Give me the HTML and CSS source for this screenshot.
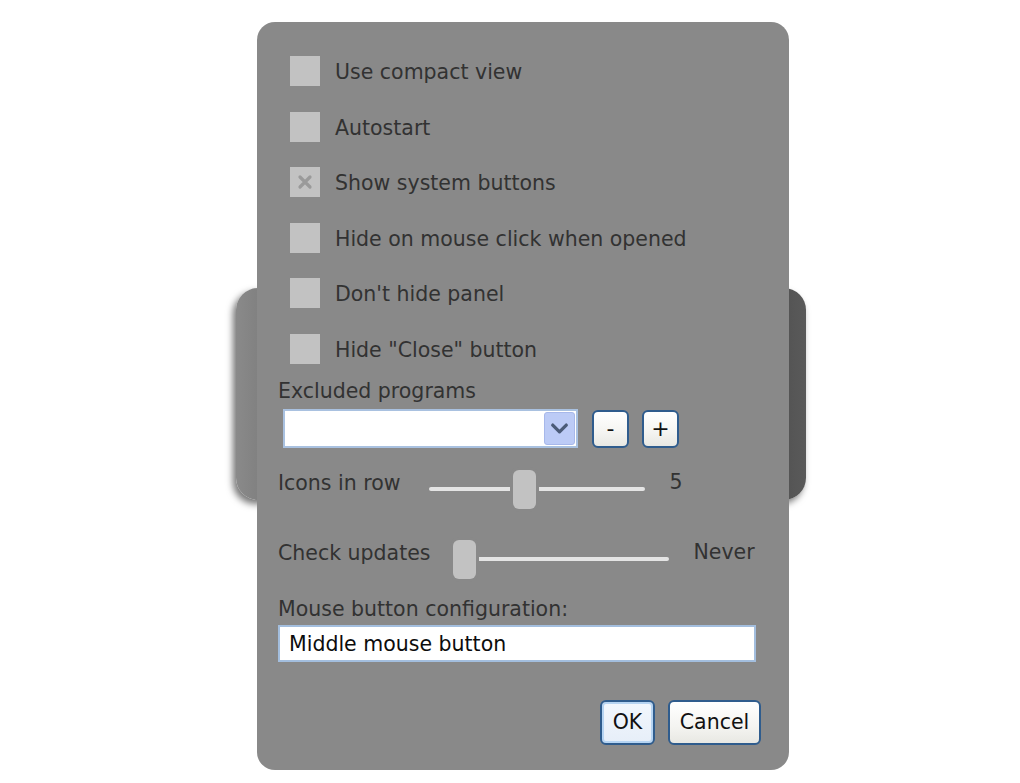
FILE: index.html
```html
<!DOCTYPE html>
<html lang="en">
<head>
<meta charset="utf-8">
<title>Settings</title>
<link rel="stylesheet" href="styles.css">
</head>
<body>
<div class="desk">
  <div class="panel"></div>
  <form class="dialog">
    <ul class="options">
      <li class="option"><span class="box"></span><span class="label">Use compact view</span></li>
      <li class="option"><span class="box"></span><span class="label">Autostart</span></li>
      <li class="option"><span class="box checked"><svg viewBox="0 0 30 30" width="30" height="30"><path d="M10 10 L20 20 M20 10 L10 20" stroke="#9a9a9a" stroke-width="3.2" stroke-linecap="round"/></svg></span><span class="label">Show system buttons</span></li>
      <li class="option"><span class="box"></span><span class="label">Hide on mouse click when opened</span></li>
      <li class="option"><span class="box"></span><span class="label">Don't hide panel</span></li>
      <li class="option"><span class="box"></span><span class="label">Hide "Close" button</span></li>
    </ul>

    <div class="caption caption-excluded">Excluded programs</div>
    <div class="combo-row">
      <div class="combo">
        <span class="combo-drop"><svg viewBox="0 0 30 32" width="30" height="32"><path d="M8 13 L15 20 L22 13" fill="none" stroke="#4b5b78" stroke-width="3.4" stroke-linecap="round" stroke-linejoin="round"/></svg></span>
      </div>
      <button type="button" class="btn btn-small">-</button>
      <button type="button" class="btn btn-small">+</button>
    </div>

    <div class="slider-row row-icons">
      <span class="caption">Icons in row</span>
      <div class="slider"><span class="track"></span><span class="thumb" style="left: 84px"></span></div>
      <span class="value">5</span>
    </div>

    <div class="slider-row row-updates">
      <span class="caption">Check updates</span>
      <div class="slider"><span class="track"></span><span class="thumb" style="left: 0px"></span></div>
      <span class="value">Never</span>
    </div>

    <div class="caption caption-mouse">Mouse button configuration:</div>
    <div class="field">Middle mouse button</div>

    <div class="actions">
      <button type="button" class="btn btn-ok">OK</button>
      <button type="button" class="btn btn-cancel">Cancel</button>
    </div>
  </form>
</div>
</body>
</html>
```

FILE: styles.css
```css
* { box-sizing: border-box; }

html, body {
  margin: 0;
  padding: 0;
  background: #ffffff;
}

body {
  font-family: "DejaVu Sans", sans-serif;
  font-size: 20.5px;
  color: #333333;
}

.desk {
  position: relative;
  width: 1020px;
  height: 783px;
  padding: 22px 0 0 257px;
}

/* the dark bar behind the settings dialog */
.panel {
  position: absolute;
  left: 236px;
  top: 288px;
  width: 570px;
  height: 212px;
  border-radius: 22px;
  background: linear-gradient(90deg, #8a8a8a 0%, #777777 8%, #5e5e5e 50%, #535353 96%, #5a5a5a 100%);
  box-shadow: -3px 4px 7px rgba(0, 0, 0, 0.55);
}

.dialog {
  position: relative;
  width: 532px;
  height: 748px;
  margin: 0;
  padding: 35px 0 25px 21px;
  background: #898989;
  border-radius: 18px;
  display: flex;
  flex-direction: column;
}

.options {
  list-style: none;
  margin: -1px 0 0;
  padding: 0 0 0 12px;
  display: flex;
  flex-direction: column;
  gap: 25.5px;
}

.option {
  display: flex;
  align-items: center;
  gap: 15px;
  height: 30px;
}

.option .label { padding-top: 2px; }

.box {
  width: 30px;
  height: 30px;
  background: #c2c2c2;
  flex: none;
  display: block;
}

.box svg { display: block; }

.label, .caption, .value {
  line-height: 24px;
  color: #323232;
  white-space: nowrap;
}

.caption-excluded { margin-top: 15px; }

.combo-row {
  display: flex;
  align-items: flex-start;
  margin-top: 6px;
  margin-left: 5px;
}

.combo {
  width: 295px;
  height: 39px;
  background: #ffffff;
  border: 2px solid #a9c1e0;
  display: flex;
  justify-content: flex-end;
  align-items: center;
  padding-right: 1px;
}

.combo-drop {
  width: 31px;
  height: 33px;
  background: #bccbf6;
  border: 1px solid #a7b8ea;
  border-radius: 3px;
  display: flex;
  align-items: center;
  justify-content: center;
}

.combo-drop svg { display: block; }

.btn {
  font-family: inherit;
  font-size: 20.5px;
  color: #111111;
  border: 2px solid #2f5c8d;
  border-radius: 6px;
  background: linear-gradient(#ffffff, #f4f4f1 60%, #e8e8e3);
  padding: 0;
  line-height: 1;
}

.btn-small {
  width: 37px;
  height: 38px;
  margin-top: 1px;
  margin-left: 14px;
  font-size: 22px;
}

.btn-small + .btn-small { margin-left: 13px; }

.slider-row {
  display: flex;
  align-items: flex-start;
  height: 39px;
}

.slider-row .caption { padding-top: 1px; }

.row-icons { margin-top: 22px; gap: 28px; }
.row-icons .value { margin-left: -3px; }

.row-updates { margin-top: 31px; gap: 22px; }
.row-updates .value { margin-left: 3px; }

.slider {
  position: relative;
  width: 216px;
  height: 39px;
  flex: none;
}

.track {
  position: absolute;
  left: 0;
  right: 0;
  top: 17px;
  height: 4px;
  border-radius: 2px;
  background: #e4e4e4;
}

.thumb {
  position: absolute;
  top: 0;
  width: 23px;
  height: 39px;
  border-radius: 6px;
  background: #c2c2c2;
  box-shadow: 0 0 0 3px #898989;
}

.caption-mouse { margin-top: 18px; }

.field {
  margin-top: 4px;
  width: 478px;
  height: 37px;
  background: #ffffff;
  border: 2px solid #a3bede;
  padding-left: 9px;
  line-height: 34px;
  color: #0c0c0c;
}

.actions {
  display: flex;
  gap: 13px;
  margin-top: 38px;
  padding-left: 322px;
}

.btn-ok {
  width: 55px;
  height: 45px;
  background: linear-gradient(#f2f7fd, #e6eef8);
  box-shadow: inset 0 0 0 2px #b6d4f2;
}

.btn-cancel {
  width: 93px;
  height: 45px;
}
```
